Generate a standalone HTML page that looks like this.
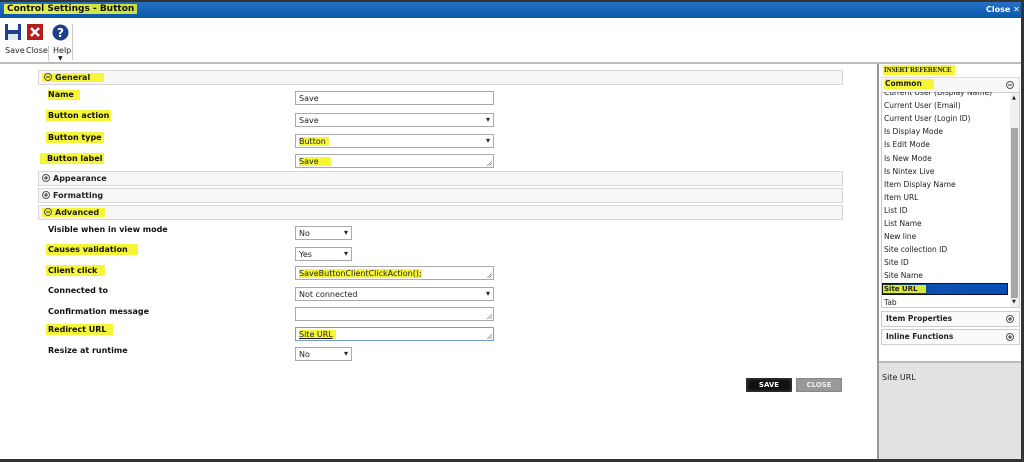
<!DOCTYPE html>
<html><head><style>
*{margin:0;padding:0;box-sizing:border-box}
body{width:1024px;height:462px;overflow:hidden;background:#fff;font-family:"DejaVu Sans",Verdana,sans-serif;font-size:8px;color:#222;position:relative}
.a{position:absolute;white-space:nowrap}
.hl{background:#f5f53a}
.lbl{position:absolute;left:46px;font-weight:bold;font-size:8px;color:#111;padding:1px 2px;white-space:nowrap}
.hdr{position:absolute;left:38px;width:805px;height:15px;border:1px solid #d8d8d8;background:#f6f6f6;font-weight:bold;font-size:8px;padding:2px 3px;white-space:nowrap}
.ci{display:inline-block;width:8px;height:8px;margin-right:3px;vertical-align:-1px}
.in{position:absolute;left:295px;height:14px;border:1px solid #aaa;background:#fff;font-size:8px;padding:2px 3px;white-space:nowrap}
.sel::after{content:"▾";position:absolute;right:3px;top:1px;font-size:8px}
.ta::after{content:"";position:absolute;right:1px;bottom:1px;width:5px;height:5px;background:linear-gradient(135deg,transparent 45%,#888 45%,#888 55%,transparent 55%,transparent 70%,#888 70%,#888 80%,transparent 80%)}
.ri{position:absolute;left:884px;font-size:7.5px;color:#222;white-space:nowrap}
</style></head><body>
<div class="a" style="left:0;top:0;width:1024px;height:2px;background:#333"></div>
<div class="a" style="left:0;top:2px;width:1024px;height:16px;background:linear-gradient(#2470c4,#0c58ab)"></div>
<div class="a" style="left:4px;top:4px;padding:0 3px;font-weight:bold;font-size:9px;color:#111;background:linear-gradient(90deg,#e8f050,#c8e040);">Control Settings - Button</div>
<div class="a" style="left:986px;top:5px;color:#fff;font-size:8px;font-weight:bold">Close <span style="font-size:8px">✕</span></div>
<div class="a" style="left:1021px;top:0;width:3px;height:462px;background:#333"></div>
<div class="a" style="left:0;top:459px;width:1024px;height:3px;background:#333"></div>
<svg class="a" style="left:5px;top:24px" width="16" height="16"><rect x="0" y="0" width="16" height="16" fill="#1d3f8c"/><rect x="3" y="0" width="10" height="6" fill="#fff"/><rect x="3" y="10" width="10" height="6" fill="#e0e6f0"/></svg>
<svg class="a" style="left:27px;top:24px" width="16" height="16"><rect width="16" height="16" fill="#b51c1c"/><path d="M4 4L12 12M12 4L4 12" stroke="#fff" stroke-width="2.5"/></svg>
<svg class="a" style="left:52px;top:24px" width="17" height="17"><circle cx="8.5" cy="8.5" r="8" fill="#1d3f8c"/><text x="8.5" y="13" font-size="12" font-weight="bold" fill="#fff" text-anchor="middle" font-family="DejaVu Sans">?</text></svg>
<div class="a" style="left:5px;top:46px;font-size:8px">Save</div>
<div class="a" style="left:26px;top:46px;font-size:8px">Close</div>
<div class="a" style="left:48px;top:46px;width:1px;height:15px;background:#ccc"></div>
<div class="a" style="left:53px;top:46px;font-size:8px">Help</div>
<div class="a" style="left:58px;top:55px;font-size:6px">▼</div>
<div class="a" style="left:72px;top:24px;width:1px;height:36px;background:#ccc"></div>
<div class="a" style="left:0;top:62px;width:1021px;height:2px;background:#bbb"></div>
<div class="hdr" style="top:70px"><span class="hl" style="padding:0 14px 0 2px"><svg class="ci" viewBox="0 0 8 8"><circle cx="4" cy="4" r="3.5" fill="none" stroke="#555"/><path d="M2 4H6" stroke="#333"/></svg>General</span></div>
<div class="lbl" style="top:89px"><span class="hl" style="padding:0 6px 1px 0">Name</span></div>
<div class="in" style="top:91px;width:199px">Save</div>
<div class="lbl hl" style="top:110px">Button action</div>
<div class="in sel" style="top:113px;width:199px">Save</div>
<div class="lbl hl" style="top:132px">Button type</div>
<div class="in sel" style="top:134px;width:199px"><span class="hl" style="padding:0 3px 0 0">Button</span></div>
<div class="lbl hl" style="top:153px;left:40px;padding-left:7px">Button label</div>
<div class="in ta" style="top:154px;width:199px"><span class="hl" style="padding:0 12px 0 0">Save</span></div>
<div class="hdr" style="top:171px"><svg class="ci" viewBox="0 0 8 8"><circle cx="4" cy="4" r="3.5" fill="none" stroke="#555"/><path d="M2 4H6M4 2V6" stroke="#333"/></svg>Appearance</div>
<div class="hdr" style="top:188px"><svg class="ci" viewBox="0 0 8 8"><circle cx="4" cy="4" r="3.5" fill="none" stroke="#555"/><path d="M2 4H6M4 2V6" stroke="#333"/></svg>Formatting</div>
<div class="hdr" style="top:205px"><span class="hl" style="padding:0 6px 0 2px"><svg class="ci" viewBox="0 0 8 8"><circle cx="4" cy="4" r="3.5" fill="none" stroke="#555"/><path d="M2 4H6" stroke="#333"/></svg>Advanced</span></div>
<div class="lbl" style="top:224px">Visible when in view mode</div>
<div class="in sel" style="top:226px;width:57px">No</div>
<div class="lbl hl" style="top:244px;padding-right:10px">Causes validation</div>
<div class="in sel" style="top:247px;width:57px">Yes</div>
<div class="lbl hl" style="top:265px;padding-right:8px">Client click</div>
<div class="in ta" style="top:266px;width:199px"><span class="hl">SaveButtonClientClickAction();</span></div>
<div class="lbl" style="top:285px">Connected to</div>
<div class="in sel" style="top:287px;width:199px">Not connected</div>
<div class="lbl" style="top:306px">Confirmation message</div>
<div class="in ta" style="top:307px;width:199px"></div>
<div class="lbl hl" style="top:324px;padding-right:6px">Redirect URL</div>
<div class="in ta" style="top:327px;width:199px;border-color:#7a9cc8"><span class="hl" style="text-decoration:underline;padding-right:3px">Site URL</span></div>
<div class="lbl" style="top:345px">Resize at runtime</div>
<div class="in sel" style="top:347px;width:57px">No</div>
<div class="a" style="left:746px;top:378px;width:46px;height:14px;background:#111;color:#fff;font-size:7px;font-weight:bold;text-align:center;line-height:14px;box-shadow:inset 0 0 4px #555">SAVE</div>
<div class="a" style="left:796px;top:378px;width:46px;height:14px;background:#999;color:#eee;font-size:7px;font-weight:bold;text-align:center;line-height:12px;border:1px solid #888">CLOSE</div>
<div class="a" style="left:877px;top:64px;width:2px;height:395px;background:#999"></div>
<div class="a hl" style="left:883px;top:65px;font-weight:bold;padding:1px 3px 1px 1px;width:72px;font-family:'Liberation Serif',serif;font-size:7px;letter-spacing:-0.2px">INSERT REFERENCE</div>
<div class="a" style="left:881px;top:77px;width:139px;height:16px;border:1px solid #ddd;background:#f8f8f8"></div>
<div class="a hl" style="left:884px;top:79px;font-weight:bold;font-size:7.5px;padding:0 12px 1px 1px">Common</div>
<svg class="a" style="left:1006px;top:81px" width="8" height="8" viewBox="0 0 8 8"><circle cx="4" cy="4" r="3.5" fill="none" stroke="#555"/><path d="M2 4H6" stroke="#333"/></svg>
<div class="a" style="left:881px;top:92px;width:139px;height:216px;border:1px solid #ccc;overflow:hidden"></div>
<div class="a" style="left:1010px;top:93px;width:9px;height:214px;background:#f0f0f0"></div>
<div class="a" style="left:1011px;top:128px;width:7px;height:170px;background:#a8a8a8"></div>
<div class="a" style="left:1012px;top:95px;font-size:5px">▲</div>
<div class="a" style="left:1012px;top:299px;font-size:5px">▼</div>
<div class="ri" style="top:88px;clip-path:inset(4px 0 0 0)">Current User (Display Name)</div>
<div class="ri" style="top:101px">Current User (Email)</div>
<div class="ri" style="top:114px">Current User (Login ID)</div>
<div class="ri" style="top:127px">Is Display Mode</div>
<div class="ri" style="top:140px">Is Edit Mode</div>
<div class="ri" style="top:154px">Is New Mode</div>
<div class="ri" style="top:167px">Is Nintex Live</div>
<div class="ri" style="top:180px">Item Display Name</div>
<div class="ri" style="top:193px">Item URL</div>
<div class="ri" style="top:206px">List ID</div>
<div class="ri" style="top:219px">List Name</div>
<div class="ri" style="top:232px">New line</div>
<div class="ri" style="top:245px">Site collection ID</div>
<div class="ri" style="top:258px">Site ID</div>
<div class="ri" style="top:271px">Site Name</div>
<div class="a" style="left:882px;top:283px;width:126px;height:12px;background:linear-gradient(90deg,#1a3a10,#0a4fb0 40%,#0850b8);border:1px solid #112"></div>
<div class="a" style="left:883px;top:285px;background:#d8e838;font-weight:bold;font-size:7px;padding:0 8px 0 1px">Site URL</div>
<div class="ri" style="top:298px">Tab</div>
<div class="a" style="left:881px;top:311px;width:139px;height:16px;border:1px solid #ccc;background:#fafafa;font-weight:bold;font-size:7.5px;padding:2px 4px">Item Properties</div>
<svg class="a" style="left:1006px;top:315px" width="8" height="8" viewBox="0 0 8 8"><circle cx="4" cy="4" r="3.5" fill="none" stroke="#555"/><path d="M2 4H6M4 2V6" stroke="#333"/></svg>
<div class="a" style="left:881px;top:329px;width:139px;height:16px;border:1px solid #ccc;background:#fafafa;font-weight:bold;font-size:7.5px;padding:2px 4px">Inline Functions</div>
<svg class="a" style="left:1006px;top:333px" width="8" height="8" viewBox="0 0 8 8"><circle cx="4" cy="4" r="3.5" fill="none" stroke="#555"/><path d="M2 4H6M4 2V6" stroke="#333"/></svg>
<div class="a" style="left:879px;top:361px;width:142px;height:98px;background:#e2e2e2;border-top:2px solid #bbb"></div>
<div class="a" style="left:882px;top:373px;font-size:8px">Site URL</div>
</body></html>
